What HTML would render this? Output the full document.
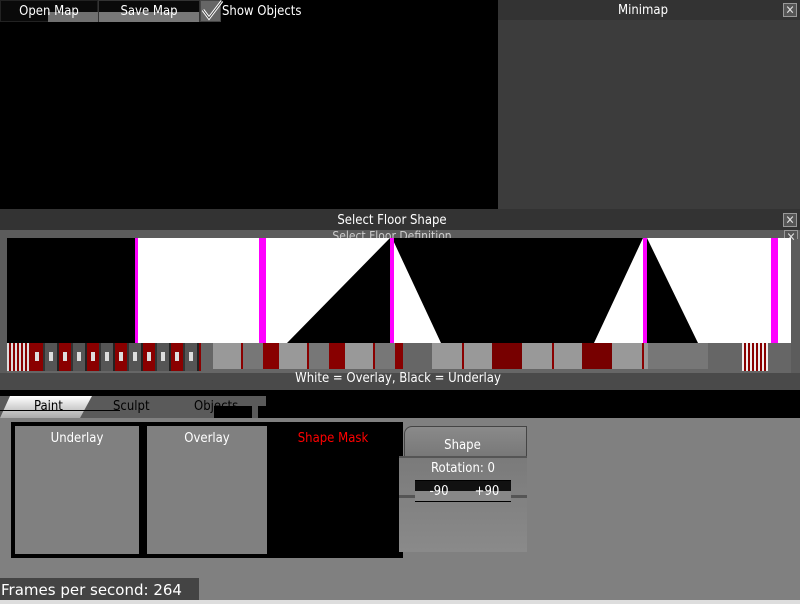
<!DOCTYPE html>
<html><head><meta charset="utf-8"><style>
*{margin:0;padding:0;box-sizing:border-box}
body{width:800px;height:604px;overflow:hidden;background:#808080;position:relative;font-family:"DejaVu Sans Condensed","DejaVu Sans","Liberation Sans",sans-serif;color:#fff}
.a{position:absolute}
.t{font-size:12px;text-align:center;white-space:nowrap}
.x{position:absolute;width:14px;height:14px;border:1px solid #999;background:#555;color:#ddd;font-size:12px;line-height:12px;text-align:center}
</style></head><body>
<div class="a" style="left:0;top:0;width:498px;height:209px;background:#000"></div>
<div class="a" style="left:0;top:0;width:98px;height:22px;background:#0a0a0a;border:1px solid #222"></div>
<div class="a" style="left:48px;top:12px;width:50px;height:10px;background:#707070"></div>
<div class="a t" style="left:0;top:4px;width:98px;font-size:13px">Open Map</div>
<div class="a" style="left:98px;top:0;width:102px;height:22px;background:#0a0a0a;border:1px solid #333"></div>
<div class="a" style="left:99px;top:12px;width:100px;height:10px;background:#777"></div>
<div class="a t" style="left:98px;top:4px;width:102px;font-size:13px">Save Map</div>
<div class="a" style="left:200px;top:0;width:21px;height:22px;background:#666;border:1px solid #444"></div>
<svg class="a" style="left:200px;top:0" width="24" height="22"><path d="M3 10 L9 18 L22 1" stroke="#fff" stroke-width="3" fill="none"/><path d="M3 10 L9 18 L22 1" stroke="#444" stroke-width="1" fill="none"/></svg>
<div class="a" style="left:222px;top:4px;font-size:13px">Show Objects</div>
<div class="a" style="left:498px;top:0;width:302px;height:209px;background:#3c3c3c"></div>
<div class="a" style="left:498px;top:0;width:302px;height:20px;background:#333"></div>
<div class="a t" style="left:498px;top:3px;width:290px;font-size:13px">Minimap</div>
<div class="x" style="left:783px;top:3px">✕</div>
<div class="a" style="left:0;top:209px;width:800px;height:21px;background:#333"></div>
<div class="a t" style="left:0;top:213px;width:784px;font-size:13px">Select Floor Shape</div>
<div class="x" style="left:783px;top:213px">✕</div>
<div class="a" style="left:0;top:230px;width:800px;height:160px;background:#5c5c5c"></div>
<div class="a t" style="left:0;top:229px;width:784px;color:#ccc;font-size:12px">Select Floor Definition</div>
<div class="x" style="left:784px;top:230px;height:9px;border-bottom:none">✕</div>
<div class="a" style="left:7px;top:343px;width:784px;height:30px;background:#666"></div>
<div class="a" style="left:7px;top:343px;width:24px;height:28px;background:repeating-linear-gradient(90deg,#ddd 0 2px,#800 2px 4px)"></div>
<div class="a" style="left:31px;top:343px;width:170px;height:28px;background:repeating-linear-gradient(90deg,#8a0000 0 12px,#333 12px 14px,#555 14px 26px,#222 26px 28px)"></div>
<div class="a" style="left:31px;top:352px;width:170px;height:9px;background:repeating-linear-gradient(90deg,transparent 0 4px,#ddd 4px 8px,transparent 8px 14px)"></div>
<div class="a" style="left:213px;top:343px;width:190px;height:26px;background:repeating-linear-gradient(90deg,#999 0 28px,#8a0000 28px 30px,#777 30px 50px,#800 50px 66px)"></div>
<div class="a" style="left:432px;top:343px;width:216px;height:26px;background:repeating-linear-gradient(90deg,#999 0 30px,#8a0000 30px 32px,#999 32px 60px,#700 60px 90px)"></div>
<div class="a" style="left:648px;top:343px;width:60px;height:26px;background:#777"></div>
<div class="a" style="left:742px;top:343px;width:26px;height:28px;background:repeating-linear-gradient(90deg,#eee 0 2px,#800 2px 4px)"></div>
<svg class="a" style="left:7px;top:238px" width="784" height="105">
<rect width="784" height="105" fill="#000"/>
<rect x="128" width="255" height="105" fill="#fff"/>
<polygon points="383,0 280,105 383,105" fill="#000"/>
<polygon points="385,0 434,105 385,105" fill="#fff"/>
<polygon points="587,105 636,0 636,105" fill="#fff"/>
<rect x="640" width="144" height="105" fill="#fff"/>
<polygon points="640,0 691,105 640,105" fill="#000"/>
<rect x="128" width="3" height="105" fill="#f0f"/>
<rect x="252" width="7" height="105" fill="#f0f"/>
<rect x="383" width="4" height="105" fill="#f0f"/>
<rect x="636" width="4" height="105" fill="#f0f"/>
<rect x="764" width="7" height="105" fill="#f0f"/>
</svg>
<div class="a" style="left:0;top:373px;width:800px;height:17px;background:#4a4a4a"></div>
<div class="a t" style="left:0;top:371px;width:796px;font-size:13px">White = Overlay, Black = Underlay</div>
<div class="a" style="left:0;top:390px;width:800px;height:28px;background:#000"></div>
<div class="a" style="left:0;top:396px;width:266px;height:22px;background:#5a5a5a"></div>
<div class="a" style="left:0;top:396px;width:92px;height:22px;background:linear-gradient(#fff,#aaa);clip-path:polygon(10px 0,92px 0,80px 100%,0 100%)"></div>
<div class="a" style="left:214px;top:406px;width:38px;height:12px;background:#000"></div>
<div class="a" style="left:258px;top:406px;width:8px;height:12px;background:#000"></div>
<div class="a" style="left:0;top:410px;width:120px;height:1px;background:#000"></div>
<div class="a" style="left:34px;top:399px;font-size:13px;color:#000">Paint</div>
<div class="a" style="left:113px;top:399px;font-size:13px;color:#000">Sculpt</div>
<div class="a" style="left:194px;top:399px;font-size:13px;color:#000">Objects</div>
<div class="a" style="left:11px;top:422px;width:392px;height:136px;background:#000"></div>
<div class="a" style="left:15px;top:426px;width:124px;height:128px;background:#808080"></div>
<div class="a" style="left:147px;top:426px;width:120px;height:128px;background:#808080"></div>
<div class="a t" style="left:15px;top:431px;width:124px;font-size:13px">Underlay</div>
<div class="a t" style="left:147px;top:431px;width:120px;font-size:13px">Overlay</div>
<div class="a t" style="left:268px;top:431px;width:130px;font-size:13px;color:#f00">Shape Mask</div>
<div class="a" style="left:404px;top:426px;width:123px;height:32px;border:1px solid #444;border-bottom:none;border-radius:8px 0 0 0;background:linear-gradient(#8a8a8a,#777)"></div>
<div class="a t" style="left:404px;top:438px;width:117px;font-size:13px">Shape</div>
<div class="a" style="left:399px;top:456px;width:128px;height:96px;background:linear-gradient(#7a7a7a,#8a8a8a)"></div>
<div class="a" style="left:399px;top:456px;width:128px;height:2px;background:#555"></div>
<div class="a t" style="left:399px;top:461px;width:128px;font-size:13px">Rotation: 0</div>
<div class="a" style="left:399px;top:495px;width:128px;height:3px;background:#555"></div>
<div class="a" style="left:415px;top:480px;width:96px;height:22px;border-top:1px solid #000;border-bottom:1px solid #000;background:linear-gradient(#111 0 10px,#888 10px)"></div>
<div class="a t" style="left:415px;top:484px;width:48px;font-size:13px">-90</div>
<div class="a t" style="left:463px;top:484px;width:48px;font-size:13px">+90</div>
<div class="a" style="left:0;top:578px;width:199px;height:22px;background:#444"></div>
<div class="a" style="left:1px;top:581px;font-size:15px;font-family:'DejaVu Sans','Liberation Sans',sans-serif">Frames per second: 264</div>
<div class="a" style="left:0;top:600px;width:800px;height:4px;background:#ddd"></div>
</body></html>
